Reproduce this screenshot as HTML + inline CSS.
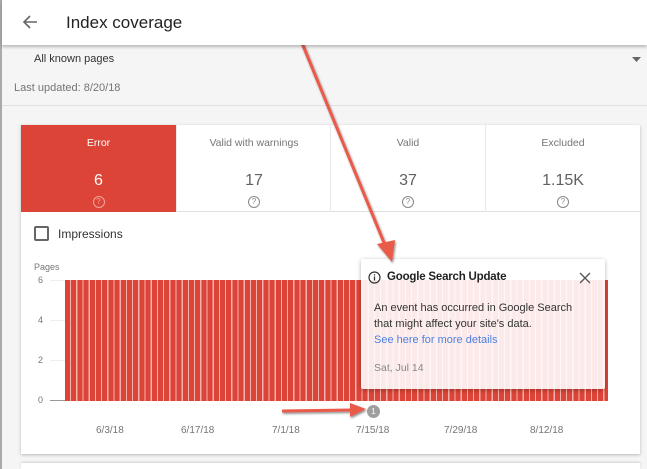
<!DOCTYPE html>
<html><head><meta charset="utf-8">
<style>
*{margin:0;padding:0;box-sizing:border-box}
body{width:647px;height:469px;overflow:hidden;background:#f5f5f5;font-family:"Liberation Sans",sans-serif;position:relative;color:#212121}
.hdr{position:absolute;left:2px;top:0;width:645px;height:45px;background:#fff;box-shadow:0 2px 3px rgba(0,0,0,.25);z-index:2}
.lb{position:absolute;left:0;top:0;width:2px;height:469px;background:#aaa}
.t{position:absolute;white-space:nowrap}
.card{position:absolute;left:21px;top:125px;width:619px;height:329px;background:#fff;box-shadow:0 1px 3px rgba(0,0,0,.25)}
.tab{position:absolute;top:0;height:87px;width:155px;text-align:center;border-bottom:1px solid #e0e0e0;border-left:1px solid #e8e8e8}
.tab .l{position:absolute;top:12px;width:100%;font-size:10.5px;color:#757575}
.tab .n{position:absolute;top:47px;width:100%;font-size:16px;color:#616161}
.q{position:absolute;top:71px;left:50%;margin-left:-6px;width:12px;height:12px;border:1px solid #888;border-radius:50%;font-size:8px;line-height:10px;color:#888}
.bars{position:absolute;left:65px;top:280px;width:543px;height:121px;background:repeating-linear-gradient(90deg,#dc4437 0 5px,#f3b3ad 5px 6.2px)}
.grid{position:absolute;left:50px;width:558px;height:1px;background:#eee}
.yl{position:absolute;left:38px;font-size:9px;color:#757575}
.xl{position:absolute;top:425px;font-size:10px;color:#757575}
</style></head><body>
<div class="lb"></div>
<div class="hdr">
 <svg style="position:absolute;left:20px;top:14px" width="16" height="16" viewBox="0 0 16 16"><path d="M15 8H2M8 2L2 8l6 6" stroke="#666" stroke-width="1.6" fill="none"/></svg>
 <div class="t" style="left:64px;top:13px;font-size:17px;color:#222">Index coverage</div>
</div>
<div class="t" style="left:34px;top:53px;font-size:11px;color:#333">All known pages</div>
<svg style="position:absolute;left:632px;top:57px" width="10" height="6"><path d="M0 0h9L4.5 5z" fill="#666"/></svg>
<div class="t" style="left:14px;top:82px;font-size:11px;color:#757575">Last updated: 8/20/18</div>
<div style="position:absolute;left:2px;top:105px;width:645px;height:1px;background:#e0e0e0"></div>
<div class="card">
 <div class="tab" style="left:0;background:#dc4437;border:none"><div class="l" style="color:#fff">Error</div><div class="n" style="color:#fff">6</div><div class="q" style="border-color:#f3a59d;color:#f3a59d">?</div></div>
 <div class="tab" style="left:155px"><div class="l">Valid with warnings</div><div class="n">17</div><div class="q">?</div></div>
 <div class="tab" style="left:309px"><div class="l">Valid</div><div class="n">37</div><div class="q">?</div></div>
 <div class="tab" style="left:464px;width:155px"><div class="l">Excluded</div><div class="n">1.15K</div><div class="q">?</div></div>
</div>
<div style="position:absolute;left:34px;top:226px;width:15px;height:15px;border:2px solid #666;border-radius:2px"></div>
<div class="t" style="left:58px;top:227px;font-size:12px;color:#333">Impressions</div>
<div class="t" style="left:34px;top:262px;font-size:9px;color:#757575">Pages</div>
<div class="grid" style="top:280px"></div><div class="grid" style="top:320px"></div><div class="grid" style="top:360px"></div>
<div style="position:absolute;left:50px;top:400px;width:558px;height:1px;background:#999"></div>
<div class="yl" style="top:275px">6</div><div class="yl" style="top:315px">4</div><div class="yl" style="top:355px">2</div><div class="yl" style="top:395px">0</div>
<div class="bars"></div>
<div class="xl" style="left:96px">6/3/18</div><div class="xl" style="left:181px">6/17/18</div><div class="xl" style="left:272px">7/1/18</div><div class="xl" style="left:356px">7/15/18</div><div class="xl" style="left:444px">7/29/18</div><div class="xl" style="left:530px">8/12/18</div>
<div style="position:absolute;left:361px;top:259px;width:244px;height:130px;background:rgba(255,255,255,.89);box-shadow:0 1px 4px rgba(0,0,0,.3);border-radius:2px">
 <svg style="position:absolute;left:7px;top:12px" width="13" height="13" viewBox="0 0 13 13"><circle cx="6.5" cy="6.5" r="5.5" stroke="#333" stroke-width="1.2" fill="none"/><path d="M6.5 5.5v4M6.5 3.3v1.2" stroke="#333" stroke-width="1.3"/></svg>
 <div class="t" style="left:26px;top:12px;font-size:11.5px;color:#222;font-weight:bold;letter-spacing:-.2px">Google Search Update</div>
 <svg style="position:absolute;left:218px;top:13px" width="12" height="12"><path d="M1 1l10 10M11 1l-10 10" stroke="#555" stroke-width="1.3"/></svg>
 <div class="t" style="left:13px;top:41px;font-size:11px;line-height:16px;color:#333">An event has occurred in Google Search<br>that might affect your site's data.<br><span style="color:#4f7fe0">See here for more details</span></div>
 <div class="t" style="left:13px;top:103px;font-size:10.5px;color:#888">Sat, Jul 14</div>
</div>
<div style="position:absolute;left:367px;top:405px;width:13px;height:13px;border-radius:50%;background:#9e9e9e;color:#fff;font-size:8px;text-align:center;line-height:13px">1</div>
<svg style="position:absolute;left:0;top:0" width="647" height="469">
 <defs><filter id="s"><feDropShadow dx="1" dy="1.5" stdDeviation="1" flood-color="#000" flood-opacity=".45"/></filter></defs>
 <g filter="url(#s)" fill="#ea5a4a" stroke="#ea5a4a">
  <path d="M302 43L385 245" stroke-width="3" fill="none"/>
  <path d="M377 244L395 240L392 262z" stroke="none"/>
  <path d="M282 411L352 410" stroke-width="3" fill="none"/>
  <path d="M350 403L366 409L350 417z" stroke="none"/>
 </g>
</svg>
<div style="position:absolute;left:21px;top:463px;width:619px;height:6px;background:#fff;box-shadow:0 -1px 2px rgba(0,0,0,.15)"></div>
</body></html>
